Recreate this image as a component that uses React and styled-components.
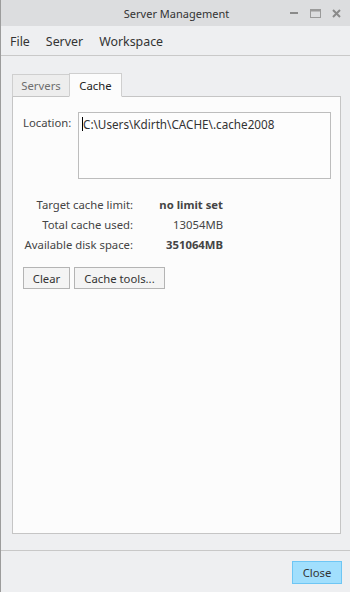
import React from "react";
import styled, { createGlobalStyle } from "styled-components";

const Global = createGlobalStyle`
  html, body { margin: 0; padding: 0; }
  body {
    font-family: "Noto Sans", "Open Sans", sans-serif;
    font-size: 11.3px;
    color: #333;
    background: #eeeff1;
  }
`;

function App() {
  return (
    <Window>
      <Global />
      <TitleBar>
        <span />
        <Title>Server Management</Title>
        <Controls>
          <svg width="9" height="4" viewBox="0 0 9 4">
            <rect x="0" y="1" width="8" height="2" fill="#8a8a8a" />
          </svg>
          <svg width="11" height="9" viewBox="0 0 11 9">
            <rect x="0.5" y="0.5" width="10" height="8" fill="none" stroke="#9a9a9a" />
            <rect x="0.5" y="0.5" width="10" height="2" fill="#9a9a9a" />
          </svg>
          <svg width="9" height="9" viewBox="0 0 9 9">
            <path d="M1 1 L8 8 M8 1 L1 8" stroke="#8a8a8a" strokeWidth="2" />
          </svg>
        </Controls>
      </TitleBar>
      <MenuBar>
        <MenuItem>File</MenuItem>
        <MenuItem>Server</MenuItem>
        <MenuItem>Workspace</MenuItem>
      </MenuBar>
      <Body>
        <Tabs>
          <Tab>Servers</Tab>
          <Tab active>Cache</Tab>
        </Tabs>
        <Panel>
          <LocationRow>
            <Label>Location:</Label>
            <PathBox>
              <Caret />
              C:\Users\Kdirth\CACHE\.cache2008
            </PathBox>
          </LocationRow>
          <InfoGrid>
            <InfoLabel>Target cache limit:</InfoLabel>
            <InfoValue bold>no limit set</InfoValue>
            <InfoLabel>Total cache used:</InfoLabel>
            <InfoValue>13054MB</InfoValue>
            <InfoLabel>Available disk space:</InfoLabel>
            <InfoValue bold>351064MB</InfoValue>
          </InfoGrid>
          <ButtonRow>
            <Button w="47">Clear</Button>
            <Button w="91">Cache tools...</Button>
          </ButtonRow>
        </Panel>
      </Body>
      <Footer>
        <CloseButton>Close</CloseButton>
      </Footer>
    </Window>
  );
}

const Window = styled.div`
  width: 349px;
  height: 592px;
  border-left: 1px solid #9c9c9c;
  display: flex;
  flex-direction: column;
  background: #eeeff1;
`;
const TitleBar = styled.div`
  height: 26px;
  background: #dcdddf;
  display: grid;
  grid-template-columns: 1fr auto 1fr;
  align-items: center;
`;
const Title = styled.div`
  font-size: 11px;
  color: #333;
  padding-left: 2px;
`;
const Controls = styled.div`
  display: flex;
  justify-content: flex-end;
  align-items: center;
  gap: 11px;
  padding-right: 9px;
  svg { display: block; }
`;
const MenuBar = styled.div`
  height: 30px;
  display: flex;
  align-items: center;
  padding: 2px 0 0 9px;
  gap: 16px;
  border-bottom: 1px solid #c9c9c9;
  box-sizing: border-box;
`;
const MenuItem = styled.div`
  font-size: 12.4px;
  color: #333;
`;
const Body = styled.div`
  flex: 1;
  display: flex;
  flex-direction: column;
  padding: 17px 9px 16px 11px;
  border-bottom: 1px solid #c8c8c8;
`;
const Tabs = styled.div`
  display: flex;
  height: 24px;
  align-items: flex-end;
  margin-bottom: -1px;
  position: relative;
  z-index: 1;
`;
const Tab = styled.div`
  box-sizing: border-box;
  height: ${(p) => (p.active ? "24px" : "23px")};
  width: ${(p) => (p.active ? "53px" : "58px")};
  justify-content: center;
  display: flex;
  align-items: center;
  border: 1px solid #cfcfcf;
  border-bottom: ${(p) => (p.active ? "1px solid #fcfcfc" : "1px solid #c5c5c5")};
  background: ${(p) => (p.active ? "#fcfcfc" : "#ededed")};
  color: ${(p) => (p.active ? "#222" : "#6e6e6e")};
  margin-left: ${(p) => (p.active ? "-1px" : "0")};
`;
const Panel = styled.div`
  flex: 1;
  background: #fcfcfc;
  border: 1px solid #c5c5c5;
  padding: 15px 9px 0 10px;
`;
const LocationRow = styled.div`
  display: flex;
  gap: 6px;
`;
const Label = styled.div`
  color: #444;
  padding-top: 3px;
  width: 49px;
  white-space: nowrap;
`;
const PathBox = styled.div`
  flex: 1;
  height: 67px;
  box-sizing: border-box;
  border: 1px solid #bdbdbd;
  background: #fdfdfd;
  padding: 3px 3px;
  color: #333;
  font-size: 11.7px;
  display: flex;
  align-items: flex-start;
`;
const Caret = styled.span`
  display: inline-block;
  width: 1px;
  height: 14px;
  background: #000;
  margin-top: 1px;
`;
const InfoGrid = styled.div`
  display: grid;
  grid-template-columns: 110px 90px;
  grid-auto-rows: 20px;
  align-items: center;
  margin-top: 15px;
  white-space: nowrap;
`;
const InfoLabel = styled.div`
  text-align: right;
  color: #444;
`;
const InfoValue = styled.div`
  text-align: right;
  color: #444;
  font-weight: ${(p) => (p.bold ? 700 : 400)};
`;
const ButtonRow = styled.div`
  display: flex;
  gap: 4px;
  margin-top: 13px;
`;
const Button = styled.div`
  box-sizing: border-box;
  width: ${(p) => p.w}px;
  height: 22px;
  border: 1px solid #b4b4b4;
  background: #f4f4f4;
  display: flex;
  align-items: center;
  justify-content: center;
  color: #333;
`;
const Footer = styled.div`
  height: 41px;
  display: flex;
  justify-content: flex-end;
  align-items: flex-start;
  padding: 10px 8px 0 0;
  box-sizing: border-box;
`;
const CloseButton = styled.div`
  box-sizing: border-box;
  width: 50px;
  height: 23px;
  border: 1px solid #6ec6f4;
  background: #a1dffd;
  display: flex;
  align-items: center;
  justify-content: center;
  color: #333;
`;

export default App;
